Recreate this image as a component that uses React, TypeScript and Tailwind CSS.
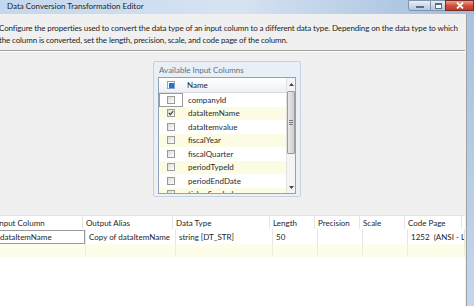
import React from 'react';

const rows = [
  { name: 'companyId', checked: false },
  { name: 'dataItemName', checked: true },
  { name: 'dataItemvalue', checked: false },
  { name: 'fiscalYear', checked: false },
  { name: 'fiscalQuarter', checked: false },
  { name: 'periodTypeId', checked: false },
  { name: 'periodEndDate', checked: false },
  { name: 'tickerSymbol', checked: false },
];

const cols = [
  { label: 'Input Column', w: 'w-[86px]' },
  { label: 'Output Alias', w: 'w-[90px]' },
  { label: 'Data Type', w: 'w-[97px]' },
  { label: 'Length', w: 'w-[45px]' },
  { label: 'Precision', w: 'w-[45px]' },
  { label: 'Scale', w: 'w-[45px]' },
  { label: 'Code Page', w: 'w-[57px]' },
];

const values = ['', 'Copy of dataItemName', 'string [DT_STR]', '50', '', '', '1252  (ANSI - Latin I)'];

function Check({ checked, header }: { checked?: boolean; header?: boolean }) {
  if (header) {
    return (
      <div className="w-[8px] h-[8px] border border-[#8aa4c4] bg-white flex items-center justify-center">
        <div className="w-[5px] h-[5px] bg-[#2a6fc9]" />
      </div>
    );
  }
  return (
    <div className="w-[8px] h-[8px] border border-[#9a9a9a] bg-gradient-to-br from-[#dcdcdc] to-white flex items-center justify-center">
      {checked && (
        <svg width="6" height="6" viewBox="0 0 6 6">
          <path d="M0.8 3 L2.4 4.6 L5.2 1.2" stroke="#3a3a3a" strokeWidth="1.1" fill="none" />
        </svg>
      )}
    </div>
  );
}

export default function App() {
  return (
    <div className="w-[474px] h-[306px] overflow-hidden bg-[#b9d0ea] flex flex-col text-[#1e1e1e]" style={{ fontFamily: 'Lato, "Open Sans", sans-serif' }}>
      {/* title bar */}
      <div className="h-[14px] flex items-start justify-between bg-gradient-to-r from-[#c4d7ed] via-[#d6e3f2] to-[#9fbbdc] shrink-0">
        <span className="pl-[7px] text-[8px] leading-[13px]">Data Conversion Transformation Editor</span>
        <div className="flex h-[11px]">
          <div className="w-[23px] h-full border border-[#7f93ab] rounded-bl-[3px] bg-gradient-to-b from-[#e6eef7] to-[#b5c8df] flex items-end justify-center pb-[2px]">
            <div className="w-[8px] h-[2px] bg-white border border-[#5c6d82]" />
          </div>
          <div className="w-[14px] h-full border-y border-[#7f93ab] bg-gradient-to-b from-[#e6eef7] to-[#b5c8df] flex items-center justify-center">
            <div className="w-[7px] h-[6px] border border-[#5c6d82] border-t-2 bg-white" />
          </div>
          <div className="w-[29px] h-full border border-[#7a2a20] bg-gradient-to-b from-[#e8a090] via-[#d0503c] to-[#c23a26] flex items-center justify-center">
            <svg width="8" height="7" viewBox="0 0 8 7">
              <path d="M1 0.5 L7 6.5 M7 0.5 L1 6.5" stroke="white" strokeWidth="1.8" />
            </svg>
          </div>
        </div>
      </div>

      {/* body */}
      <div className="flex-1 flex">
        <div className="w-[467px] bg-[#f0f0f0] border-r border-[#a0a0a0] flex flex-col text-[8px]">
          <div className="pt-[8px] ml-[-1px] leading-[12px] text-[8px] tracking-[-0.13px] text-[#1e1e1e]">
            <p className="whitespace-nowrap">Configure the properties used to convert the data type of an input column to a different data type. Depending on the data type to which</p>
            <p className="whitespace-nowrap">the column is converted, set the length, precision, scale, and code page of the column.</p>
          </div>
          <div className="mt-[4px] w-[465px] border-t border-[#a0a0a0] border-b border-b-white" />

          {/* available columns group */}
          <div className="mt-[9px] ml-[153px] w-[148px] h-[136px] border border-[#c3d2e2] rounded-[2px] bg-gradient-to-b from-[#e9eff7] to-[#f0f0f0] flex flex-col px-[4px]">
            <div className="h-[15px] leading-[17px] pl-[1px] text-[#5b6f88]">Available Input Columns</div>
            <div className="flex-1 mb-[2px] border border-[#8ea3ba] bg-white flex overflow-hidden">
              <div className="flex-1 flex flex-col overflow-hidden">
                <div className="h-[15px] shrink-0 flex items-center bg-gradient-to-b from-white to-[#eef0f3] border-b border-[#d8dce2]">
                  <div className="w-[24px] flex justify-center"><Check header /></div>
                  <span className="pl-[4px]">Name</span>
                </div>
                {rows.map((r, i) => (
                  <div key={r.name} className={`h-[13.5px] shrink-0 flex items-center ${i % 2 === 1 ? 'bg-[#fcfce4]' : 'bg-white'}`}>
                    <div className={`w-[24px] h-full flex items-center justify-center ${i === 0 ? 'border border-[#9a9a9a]' : ''}`}>
                      <Check checked={r.checked} />
                    </div>
                    <span className="pl-[5px] text-[#2b2b2b]">{r.name}</span>
                  </div>
                ))}
              </div>
              {/* scrollbar */}
              <div className="w-[9px] bg-[#f4f4f4] border-l border-[#e2e2e2] flex flex-col items-center">
                <div className="h-[12px] flex items-center justify-center">
                  <svg width="5" height="3" viewBox="0 0 5 3"><path d="M0 3 L2.5 0 L5 3 Z" fill="#4a4a4a" /></svg>
                </div>
                <div className="w-[8px] h-[63px] mt-[1px] border border-[#9c9c9c] rounded-[1px] bg-gradient-to-r from-[#e8e8e8] to-[#cfcfcf] flex flex-col items-center justify-center gap-[1px]">
                  <div className="w-[4px] h-px bg-[#7a7a7a]" />
                  <div className="w-[4px] h-px bg-[#7a7a7a]" />
                  <div className="w-[4px] h-px bg-[#7a7a7a]" />
                </div>
                <div className="flex-1" />
                <div className="h-[12px] flex items-center justify-center">
                  <svg width="5" height="3" viewBox="0 0 5 3"><path d="M0 0 L2.5 3 L5 0 Z" fill="#4a4a4a" /></svg>
                </div>
              </div>
            </div>
          </div>

          {/* grid */}
          <div className="mt-[18px] flex-1 w-[465px] bg-white border-t border-[#e4e4e4] flex flex-col overflow-hidden">
            <div className="h-[13px] flex shrink-0">
              {cols.map((c, i) => (
                <div key={c.label} className={`${c.w} shrink-0 h-full border-r border-[#e6e6e6] leading-[14px] whitespace-nowrap overflow-hidden ${i === 0 ? 'pl-0 -ml-[3px]' : 'pl-[3px]'}`}>
                  {c.label}
                </div>
              ))}
            </div>
            <div className="h-[15px] flex shrink-0">
              {cols.map((c, i) => (
                <div key={c.label} className={`${c.w} shrink-0 h-full border-r border-[#e6e6e6] whitespace-pre overflow-hidden flex items-center ${i === 0 ? '' : 'pl-[3px]'}`}>
                  {i === 0 ? (
                    <div className="w-full h-[14px] mt-px border border-[#9a9a9a] border-l-0 bg-white flex items-center">dataItemName</div>
                  ) : (
                    values[i]
                  )}
                </div>
              ))}
            </div>
            <div className="h-[13px] flex shrink-0 bg-[#fefde9]">
              {cols.map((c) => (
                <div key={c.label} className={`${c.w} shrink-0 h-full border-r border-[#eeeedc]`} />
              ))}
            </div>
            <div className="flex-1" />
          </div>
        </div>
        <div className="flex-1 bg-gradient-to-b from-[#a9c2de] to-[#c3d6ec]" />
      </div>
    </div>
  );
}
